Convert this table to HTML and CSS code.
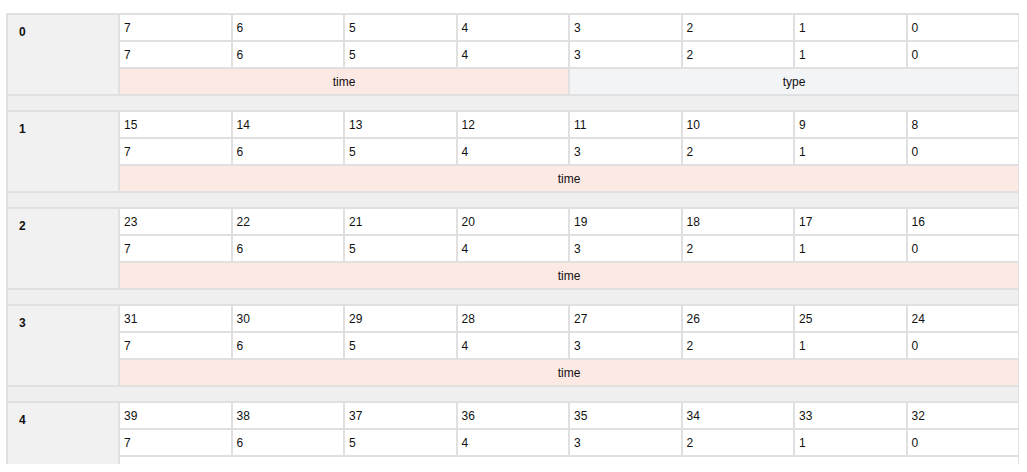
FILE: index.html
```html
<!DOCTYPE html>
<html>
<head>
<meta charset="utf-8">
<link rel="stylesheet" href="styles.css">
</head>
<body>
<div class="frame">
<table class="regs">
<tbody>
<tr><th class="lbl" rowspan="3">0</th><td>7</td><td>6</td><td>5</td><td>4</td><td>3</td><td>2</td><td>1</td><td>0</td></tr>
<tr><td>7</td><td>6</td><td>5</td><td>4</td><td>3</td><td>2</td><td>1</td><td>0</td></tr>
<tr><td class="time" colspan="4">time</td><td class="type" colspan="4">type</td></tr>
<tr class="gap"><td colspan="9"></td></tr>

<tr><th class="lbl" rowspan="3">1</th><td>15</td><td>14</td><td>13</td><td>12</td><td>11</td><td>10</td><td>9</td><td>8</td></tr>
<tr><td>7</td><td>6</td><td>5</td><td>4</td><td>3</td><td>2</td><td>1</td><td>0</td></tr>
<tr><td class="time" colspan="8">time</td></tr>
<tr class="gap"><td colspan="9"></td></tr>

<tr><th class="lbl" rowspan="3">2</th><td>23</td><td>22</td><td>21</td><td>20</td><td>19</td><td>18</td><td>17</td><td>16</td></tr>
<tr><td>7</td><td>6</td><td>5</td><td>4</td><td>3</td><td>2</td><td>1</td><td>0</td></tr>
<tr><td class="time" colspan="8">time</td></tr>
<tr class="gap"><td colspan="9"></td></tr>

<tr><th class="lbl" rowspan="3">3</th><td>31</td><td>30</td><td>29</td><td>28</td><td>27</td><td>26</td><td>25</td><td>24</td></tr>
<tr><td>7</td><td>6</td><td>5</td><td>4</td><td>3</td><td>2</td><td>1</td><td>0</td></tr>
<tr><td class="time" colspan="8">time</td></tr>
<tr class="gap"><td colspan="9"></td></tr>

<tr><th class="lbl" rowspan="3">4</th><td>39</td><td>38</td><td>37</td><td>36</td><td>35</td><td>34</td><td>33</td><td>32</td></tr>
<tr><td>7</td><td>6</td><td>5</td><td>4</td><td>3</td><td>2</td><td>1</td><td>0</td></tr>
<tr><td class="blank" colspan="8"></td></tr>
</tbody>
</table>
</div>
</body>
</html>
```

FILE: styles.css
```css
html, body {
  margin: 0;
  padding: 0;
  background: #ffffff;
}
body {
  padding: 13px 8px 0 6px;
  font-family: "Liberation Sans", Arial, sans-serif;
  font-size: 12px;
  color: #111;
}
.frame {
  height: 451px;
  overflow: hidden;
}
.regs {
  border-collapse: collapse;
  width: 1014px;
  table-layout: fixed;
}
.regs td, .regs th {
  border: 2px solid #e0e0e0;
  height: 25px;
  padding: 0 0 0 4px;
  text-align: left;
  vertical-align: middle;
  font-weight: normal;
}
.regs th.lbl {
  width: 99px;
  background: #f1f1f1;
  font-weight: bold;
  vertical-align: top;
  padding: 10px 0 0 11px;
}
.regs td.time {
  background: #fde9e4;
  text-align: center;
  padding: 0;
}
.regs td.type {
  background: #f3f4f6;
  text-align: center;
  padding: 0;
}
.regs td.blank {
  background: #ffffff;
}
.regs tr.gap td {
  background: #efefef;
  height: 14px;
  padding: 0;
}
```
